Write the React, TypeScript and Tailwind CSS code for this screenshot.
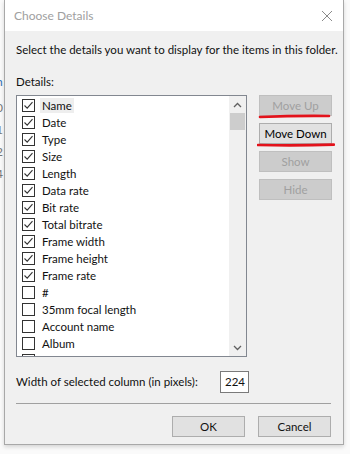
import React from 'react';

const items: { label: string; checked: boolean }[] = [
  { label: 'Name', checked: true },
  { label: 'Date', checked: true },
  { label: 'Type', checked: true },
  { label: 'Size', checked: true },
  { label: 'Length', checked: true },
  { label: 'Data rate', checked: true },
  { label: 'Bit rate', checked: true },
  { label: 'Total bitrate', checked: true },
  { label: 'Frame width', checked: true },
  { label: 'Frame height', checked: true },
  { label: 'Frame rate', checked: true },
  { label: '#', checked: false },
  { label: '35mm focal length', checked: false },
  { label: 'Account name', checked: false },
  { label: 'Album', checked: false },
  { label: '', checked: false },
];

const CheckBox: React.FC<{ checked: boolean }> = ({ checked }) => (
  <span className="w-[13px] h-[13px] border border-[#333] bg-white flex items-center justify-center shrink-0">
    {checked && (
      <svg width="11" height="11" viewBox="0 0 11 11">
        <path d="M1.5 5.5 L4.2 8.2 L9.5 2.2" fill="none" stroke="#333" strokeWidth="1.1" />
      </svg>
    )}
  </span>
);

const SideButton: React.FC<{ label: string; enabled?: boolean; underline?: boolean }> = ({ label, enabled, underline }) => (
  <div className="relative">
    <div
      className={`w-[73px] h-[21px] flex items-center justify-center border ${
        enabled ? 'bg-[#e1e1e1] border-[#adadad] text-black' : 'bg-[#cccccc] border-[#bfbfbf] text-[#a0a0a0]'
      }`}
    >
      {label}
    </div>
    {underline && (
      <svg className="absolute left-[-2px] top-[19px]" width="78" height="5" viewBox="0 0 78 5">
        <path d={enabled ? 'M1 3 Q39 4 77 2.6' : 'M3 3 Q38 1.6 72 2'} stroke="#e3121b" strokeWidth="2.6" fill="none" strokeLinecap="round" />
      </svg>
    )}
  </div>
);

export default function App() {
  return (
    <div
      className="w-[350px] h-[454px] bg-[#fafafa] flex overflow-hidden text-[11.5px] text-[#111]"
      style={{ fontFamily: 'Lato, "Noto Sans", sans-serif' }}
    >
      {/* background window glimpse */}
      <div className="w-[4px] shrink-0 flex flex-col text-[#777] text-[12px] leading-[22px] pt-[71px] overflow-hidden">
        <span className="text-[#2f6fb5] -ml-[4px]">h</span>
        <span className="-ml-[4px] mt-[4px]">0</span>
        <span className="-ml-[4px]">1</span>
        <span className="-ml-[4px]">2</span>
        <span className="-ml-[4px]">4</span>
      </div>

      <div className="w-[340px] h-[445px] border border-[#a8a8a8] border-t-0 bg-[#f0f0f0] flex flex-col shadow-[0_2px_4px_rgba(0,0,0,0.15)]">
        {/* Title bar */}
        <div className="h-[31px] bg-white flex items-center justify-between pl-[9px] pr-[10px] shrink-0">
          <span className="text-[#a0a0a0] text-[12px]">Choose Details</span>
          <svg width="12" height="12" viewBox="0 0 12 12">
            <path d="M1 1 L11 11 M11 1 L1 11" stroke="#8a8a8a" strokeWidth="1" />
          </svg>
        </div>

        {/* Body */}
        <div className="flex-1 flex flex-col px-[11px]">
          <div className="mt-[10px] h-[17px] leading-[17px] whitespace-nowrap">Select the details you want to display for the items in this folder.</div>
          <div className="mt-[15px] h-[17px] leading-[17px]">Details:</div>

          <div className="flex mt-[5px] gap-[12px]">
            {/* List */}
            <div className="w-[233px] h-[262px] border border-[#828790] bg-white flex overflow-hidden">
              <div className="flex-1 flex flex-col pl-[5px] pt-[1px] overflow-hidden">
                {items.map((it, i) => (
                  <div key={i} className="h-[17px] flex items-center gap-[5px] shrink-0">
                    <CheckBox checked={it.checked} />
                    <span className={`leading-[15px] px-[2px] ${i === 0 ? 'bg-[#eeeeee]' : ''}`}>{it.label}</span>
                  </div>
                ))}
              </div>
              {/* Scrollbar */}
              <div className="w-[17px] bg-[#f0f0f0] flex flex-col items-center">
                <div className="h-[17px] flex items-center justify-center">
                  <svg width="9" height="6" viewBox="0 0 9 6">
                    <path d="M1 5 L4.5 1.5 L8 5" stroke="#606060" strokeWidth="1.3" fill="none" />
                  </svg>
                </div>
                <div className="w-[15px] h-[17px] bg-[#cdcdcd]" />
                <div className="flex-1" />
                <div className="h-[17px] flex items-center justify-center">
                  <svg width="9" height="6" viewBox="0 0 9 6">
                    <path d="M1 1 L4.5 4.5 L8 1" stroke="#606060" strokeWidth="1.3" fill="none" />
                  </svg>
                </div>
              </div>
            </div>

            {/* Side buttons */}
            <div className="flex flex-col gap-[7px]">
              <SideButton label="Move Up" underline />
              <SideButton label="Move Down" enabled underline />
              <SideButton label="Show" />
              <SideButton label="Hide" />
            </div>
          </div>

          <div className="flex items-center mt-[14px] w-[233px] justify-between">
            <span>Width of selected column (in pixels):</span>
            <div className="w-[29px] h-[22px] border border-[#7a7a7a] bg-white flex items-center justify-end pr-[3px]">224</div>
          </div>

          <div className="mt-[10px] h-px bg-[#a0a0a0] w-[315px]" />

          <div className="flex justify-end gap-[13px] mt-[12px] pr-[1px]">
            <div className="w-[73px] h-[21px] flex items-center justify-center border border-[#adadad] bg-[#e1e1e1]">OK</div>
            <div className="w-[73px] h-[21px] flex items-center justify-center border border-[#adadad] bg-[#e1e1e1]">Cancel</div>
          </div>
        </div>
      </div>
    </div>
  );
}
